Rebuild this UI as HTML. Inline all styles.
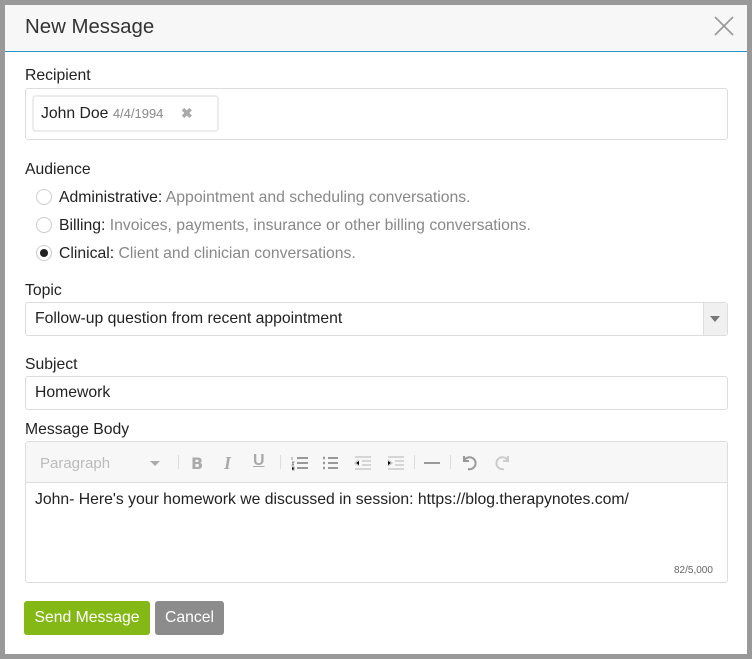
<!DOCTYPE html>
<html><head><style>
*{box-sizing:border-box;margin:0;padding:0}
body{width:752px;height:659px;background:#999;font-family:"Liberation Sans",Arial,sans-serif;color:#222;position:relative;overflow:hidden;font-size:15.75px}
.dlg{position:absolute;left:5px;top:5px;width:742px;height:649px;background:#fff}
.hdr{position:absolute;left:0;top:0;width:742px;height:47px;background:#f7f7f7;border-bottom:1px solid #2a96cc}
.hdr h1{position:absolute;left:20px;top:11px;font-weight:normal;font-size:20.4px;color:#333}
.abs{position:absolute}
.lbl{font-size:15.75px;color:#222}
.box{border:1px solid #ddd;border-radius:3px;background:#fff}
.radio{position:absolute;left:36px;width:16px;height:16px;border:1px solid #ccc;border-radius:50%;background:#fff}
.rt{position:absolute;left:59px;color:#222}
.rt span{color:#888}
.tb{position:absolute;font-size:16px;color:#aaa;font-weight:bold}
.sep{position:absolute;top:455px;width:1px;height:14px;background:#ddd}
</style></head><body>
<div class="dlg">
<div class="hdr"><h1>New Message</h1>
<svg class="abs" style="left:709px;top:11px" width="20" height="20"><path d="M1 1L19 19M19 1L1 19" stroke="#999" stroke-width="1.6"/></svg>
</div>
</div>
<div class="abs lbl" style="left:25px;top:67px">Recipient</div>
<div class="abs box" style="left:25px;top:88px;width:703px;height:52px"></div>
<div class="abs box" style="left:32px;top:95px;width:187px;height:37px;border-width:2px;border-color:#ececec;border-radius:4px"></div>
<div class="abs" style="left:41px;top:105px">John Doe <span style="font-size:13px;color:#888">4/4/1994</span></div>
<div class="abs" style="left:181px;top:105px;font-size:14px;color:#aaa;font-weight:bold">✖</div>
<div class="abs lbl" style="left:25px;top:161px">Audience</div>
<div class="radio" style="top:189px"></div>
<div class="rt" style="top:189px">Administrative: <span>Appointment and scheduling conversations.</span></div>
<div class="radio" style="top:217px"></div>
<div class="rt" style="top:217px">Billing: <span>Invoices, payments, insurance or other billing conversations.</span></div>
<div class="radio" style="top:245px"><div style="position:absolute;left:3px;top:3px;width:8px;height:8px;border-radius:50%;background:#222"></div></div>
<div class="rt" style="top:245px">Clinical: <span>Client and clinician conversations.</span></div>
<div class="abs lbl" style="left:25px;top:282px">Topic</div>
<div class="abs box" style="left:25px;top:302px;width:703px;height:34px"></div>
<div class="abs" style="left:703px;top:303px;width:24px;height:32px;background:#f0f0f0;border-left:1px solid #ddd;border-radius:0 3px 3px 0"></div>
<div class="abs" style="left:710px;top:316px;width:0;height:0;border-left:5px solid transparent;border-right:5px solid transparent;border-top:6px solid #777"></div>
<div class="abs" style="left:35px;top:310px">Follow-up question from recent appointment</div>
<div class="abs lbl" style="left:25px;top:356px">Subject</div>
<div class="abs box" style="left:25px;top:376px;width:703px;height:34px"></div>
<div class="abs" style="left:35px;top:384px">Homework</div>
<div class="abs lbl" style="left:25px;top:421px">Message Body</div>
<div class="abs box" style="left:25px;top:441px;width:703px;height:142px"></div>
<div class="abs" style="left:26px;top:442px;width:701px;height:41px;background:#f7f7f7;border-bottom:1px solid #ddd;border-radius:3px 3px 0 0"></div>
<div class="abs" style="left:40px;top:455px;font-size:15px;color:#bbb">Paragraph</div>
<div class="abs" style="left:150px;top:461px;border-left:5px solid transparent;border-right:5px solid transparent;border-top:5px solid #aaa"></div>
<div class="sep" style="left:178px"></div>
<div class="tb" style="left:191px;top:454px;font-family:'DejaVu Sans',sans-serif">B</div>
<div class="tb" style="left:224px;top:453px;font-style:italic;font-family:'Liberation Serif',serif;font-size:18px">I</div>
<div class="tb" style="left:253px;top:452px;text-decoration:underline">U</div>
<div class="sep" style="left:280px"></div>
<svg class="abs" style="left:290px;top:455px" width="60" height="16" stroke="#999" stroke-width="2">
<path d="M7 3H18M7 8H18M7 13H18"/><path d="M2 2V5M2 7H4L2 10H4M2 12H4V15H2" stroke-width="1"/>
<path d="M38 3H48M38 8H48M38 13H48"/><path d="M33 3h2M33 8h2M33 13h2" stroke-width="2.5"/></svg>
<svg class="abs" style="left:354px;top:455px" width="60" height="16" stroke="#ccc" stroke-width="1.5"><path d="M1 2H17M8 6H17M8 10H17M1 14H17M5 5L1 8L5 11"/><path d="M34 2H50M41 6H50M41 10H50M34 14H50M34 5L38 8L34 11"/></svg>
<div class="sep" style="left:414px"></div>
<div class="abs" style="left:424px;top:462px;width:16px;height:2px;background:#999"></div>
<div class="sep" style="left:450px"></div>
<svg class="abs" style="left:460px;top:453px" width="60" height="20" fill="none" stroke-width="2"><path d="M4 3V8H9M4 8A6 6 0 1 1 8 16" stroke="#999"/><path d="M48 3V8H43M48 8A6 6 0 1 0 44 16" stroke="#ccc"/></svg>
<div class="abs" style="left:35px;top:491px">John- Here's your homework we discussed in session: https://blog.therapynotes.com/</div>
<div class="abs" style="left:674px;top:565px;font-size:10px;color:#666">82/5,000</div>
<div class="abs" style="left:24px;top:601px;width:126px;height:34px;background:#84b817;border-radius:3px;color:#fff;line-height:34px;text-align:center">Send Message</div>
<div class="abs" style="left:155px;top:601px;width:69px;height:34px;background:#8c8c8c;border-radius:3px;color:#fff;line-height:34px;text-align:center">Cancel</div>
</body></html>
